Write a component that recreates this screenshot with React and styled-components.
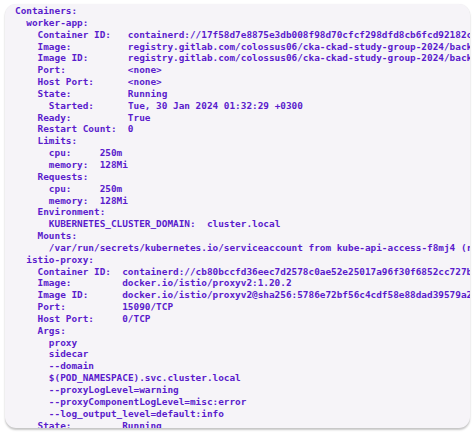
import styled, { createGlobalStyle } from "styled-components";

const GlobalStyle = createGlobalStyle`
  html, body {
    margin: 0;
    padding: 0;
    background: #ffffff;
  }
`;

const pad = (label, col) => label.padEnd(col, " ");

const rows = [
  [0, "Containers:"],
  [2, "worker-app:"],
  [4, "Container ID:", 16, "containerd://17f58d7e8875e3db008f98d70cfcf298dfd8cb6fcd92182c4a1e"],
  [4, "Image:", 16, "registry.gitlab.com/colossus06/cka-ckad-study-group-2024/backend:latest"],
  [4, "Image ID:", 16, "registry.gitlab.com/colossus06/cka-ckad-study-group-2024/backend@sha256:9e1"],
  [4, "Port:", 16, "<none>"],
  [4, "Host Port:", 16, "<none>"],
  [4, "State:", 16, "Running"],
  [6, "Started:", 14, "Tue, 30 Jan 2024 01:32:29 +0300"],
  [4, "Ready:", 16, "True"],
  [4, "Restart Count:", 16, "0"],
  [4, "Limits:"],
  [6, "cpu:", 9, "250m"],
  [6, "memory:", 9, "128Mi"],
  [4, "Requests:"],
  [6, "cpu:", 9, "250m"],
  [6, "memory:", 9, "128Mi"],
  [4, "Environment:"],
  [6, "KUBERNETES_CLUSTER_DOMAIN:", 28, "cluster.local"],
  [4, "Mounts:"],
  [6, "/var/run/secrets/kubernetes.io/serviceaccount from kube-api-access-f8mj4 (ro)"],
  [2, "istio-proxy:"],
  [4, "Container ID:", 15, "containerd://cb80bccfd36eec7d2578c0ae52e25017a96f30f6852cc727b91"],
  [4, "Image:", 15, "docker.io/istio/proxyv2:1.20.2"],
  [4, "Image ID:", 15, "docker.io/istio/proxyv2@sha256:5786e72bf56c4cdf58e88dad39579a2b"],
  [4, "Port:", 15, "15090/TCP"],
  [4, "Host Port:", 15, "0/TCP"],
  [4, "Args:"],
  [6, "proxy"],
  [6, "sidecar"],
  [6, "--domain"],
  [6, "$(POD_NAMESPACE).svc.cluster.local"],
  [6, "--proxyLogLevel=warning"],
  [6, "--proxyComponentLogLevel=misc:error"],
  [6, "--log_output_level=default:info"],
  [4, "State:", 15, "Running"],
  [6, "Started:", 13, "Tue, 30 Jan 2024 01:32:28 +0300"],
];

export default function App() {
  return (
    <>
      <GlobalStyle />
      <Page>
        <Card>
          <Output>
            {rows.map(([indent, label, col, value], i) => (
              <Line key={i} $indent={indent}>
                {value ? pad(label, col) + value : label}
              </Line>
            ))}
          </Output>
        </Card>
      </Page>
    </>
  );
}

const Page = styled.div`
  width: 474px;
  height: 437px;
  padding: 4px 4px 0 5px;
  box-sizing: border-box;
`;

const Card = styled.div`
  height: 424px;
  overflow: hidden;
  border-radius: 11px;
  background-color: #f6f4f8;
  box-shadow: 0 2px 2px rgba(0, 0, 0, 0.22), 0 0 1px rgba(0, 0, 0, 0.08);
`;

const Output = styled.div`
  padding: 1px 0 0 10px;
  font-family: "DejaVu Sans Mono", "Liberation Mono", monospace;
  font-weight: bold;
  font-size: 9.4px;
  line-height: 11.85px;
  color: #5a1ccc;
`;

const Line = styled.div`
  white-space: pre;
  padding-left: ${(p) => p.$indent}ch;
`;
